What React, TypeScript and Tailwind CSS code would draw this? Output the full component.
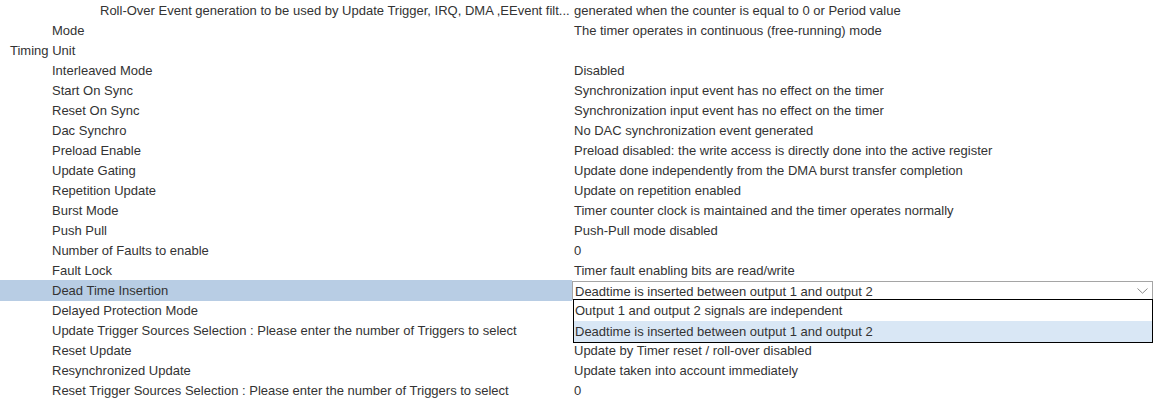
import React from 'react';

type Row = { level: 0 | 1 | 2; label: string; value: string };

const rows: Row[] = [
  { level: 2, label: 'Roll-Over Event generation to be used by Update Trigger, IRQ, DMA ,EEvent filt...', value: 'generated when the counter is equal to 0 or Period value' },
  { level: 1, label: 'Mode', value: 'The timer operates in continuous (free-running) mode' },
  { level: 0, label: 'Timing Unit', value: '' },
  { level: 1, label: 'Interleaved Mode', value: 'Disabled' },
  { level: 1, label: 'Start On Sync', value: 'Synchronization input event has no effect on the timer' },
  { level: 1, label: 'Reset On Sync', value: 'Synchronization input event has no effect on the timer' },
  { level: 1, label: 'Dac Synchro', value: 'No DAC synchronization event generated' },
  { level: 1, label: 'Preload Enable', value: 'Preload disabled: the write access is directly done into the active register' },
  { level: 1, label: 'Update Gating', value: 'Update done independently from the DMA burst transfer completion' },
  { level: 1, label: 'Repetition Update', value: 'Update on repetition enabled' },
  { level: 1, label: 'Burst Mode', value: 'Timer counter clock is maintained and the timer operates normally' },
  { level: 1, label: 'Push Pull', value: 'Push-Pull mode disabled' },
  { level: 1, label: 'Number of Faults to enable', value: '0' },
  { level: 1, label: 'Fault Lock', value: 'Timer fault enabling bits are read/write' },
  { level: 1, label: 'Dead Time Insertion', value: '__select__' },
  { level: 1, label: 'Delayed Protection Mode', value: '' },
  { level: 1, label: 'Update Trigger Sources Selection : Please enter the number of Triggers to select', value: '' },
  { level: 1, label: 'Reset Update', value: 'Update by Timer reset / roll-over disabled' },
  { level: 1, label: 'Resynchronized Update', value: 'Update taken into account immediately' },
  { level: 1, label: 'Reset Trigger Sources Selection : Please enter the number of Triggers to select', value: '0' },
];

const indent = ['pl-[10px]', 'pl-[52px]', 'pl-[100px]'];

const DeadTimeSelect: React.FC = () => (
  <div className="relative h-[20px] pt-px pr-[3px]">
    <div className="flex h-[19px] items-center justify-between border border-[#a5a5a5] bg-white pl-[2px] pr-[4px] pt-px">
      <span className="leading-none">Deadtime is inserted between output 1 and output 2</span>
      <svg width="11" height="6" viewBox="0 0 11 6" fill="none" stroke="#8a8a8a" strokeWidth="1">
        <path d="M0.5 0.5 L5.5 5.2 L10.5 0.5" />
      </svg>
    </div>
    <div className="absolute left-px right-[3px] top-[19px] z-10 border border-black bg-white">
      <div className="flex h-[21px] items-center pl-px pt-px">Output 1 and output 2 signals are independent</div>
      <div className="flex h-[21px] items-center bg-[#d9e7f5] pl-px pt-px">Deadtime is inserted between output 1 and output 2</div>
    </div>
  </div>
);

const App: React.FC = () => {
  return (
    <div className="h-[398px] w-[1156px] overflow-hidden bg-white font-['Liberation_Sans',Arial,sans-serif] text-[13px] text-[#333]">
      {rows.map((row, i) => {
        const selected = row.value === '__select__';
        return (
          <div key={i} className="grid h-[20px] grid-cols-[572px_1fr]">
            <div className={`flex items-center whitespace-nowrap pt-px ${indent[row.level]} ${selected ? 'bg-[#b8cde4]' : ''}`}>
              {row.label}
            </div>
            {selected ? (
              <DeadTimeSelect />
            ) : (
              <div className="flex items-center whitespace-nowrap pl-[2px] pt-px">{row.value}</div>
            )}
          </div>
        );
      })}
    </div>
  );
};

export default App;
